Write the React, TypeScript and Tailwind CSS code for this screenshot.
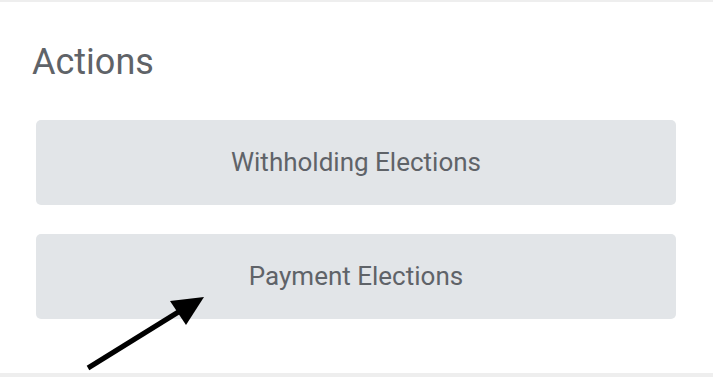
export default function App() {
  const actions = ["Withholding Elections", "Payment Elections"]

  return (
    <div className="relative flex h-[377px] w-[713px] flex-col overflow-hidden bg-white font-['Roboto',sans-serif]">
      <div className="h-[2px] bg-[#eeeeee]" />
      <div className="flex flex-1 flex-col px-9 pt-[40px]">
        <h2 className="-ml-[4px] text-[36px] leading-[40px] font-normal text-[#5f6368]">Actions</h2>
        <div className="mt-[38px] flex flex-col gap-[29px]">
          {actions.map((label) => (
            <button
              key={label}
              className="flex h-[85px] w-[640px] items-center justify-center rounded-[5px] bg-[#e2e5e8] text-[26px] text-[#5f6368]"
            >
              {label}
            </button>
          ))}
        </div>
      </div>
      <div className="h-[4px] bg-[#eeeeee]" />

      {/* annotation arrow */}
      <svg className="pointer-events-none absolute left-0 top-0" width="713" height="377" viewBox="0 0 713 377">
        <line x1="88" y1="368" x2="180" y2="311" stroke="#000" strokeWidth="5" strokeLinecap="butt" />
        <polygon points="204,297 170,301 186,325" fill="#000" />
      </svg>
    </div>
  )
}
